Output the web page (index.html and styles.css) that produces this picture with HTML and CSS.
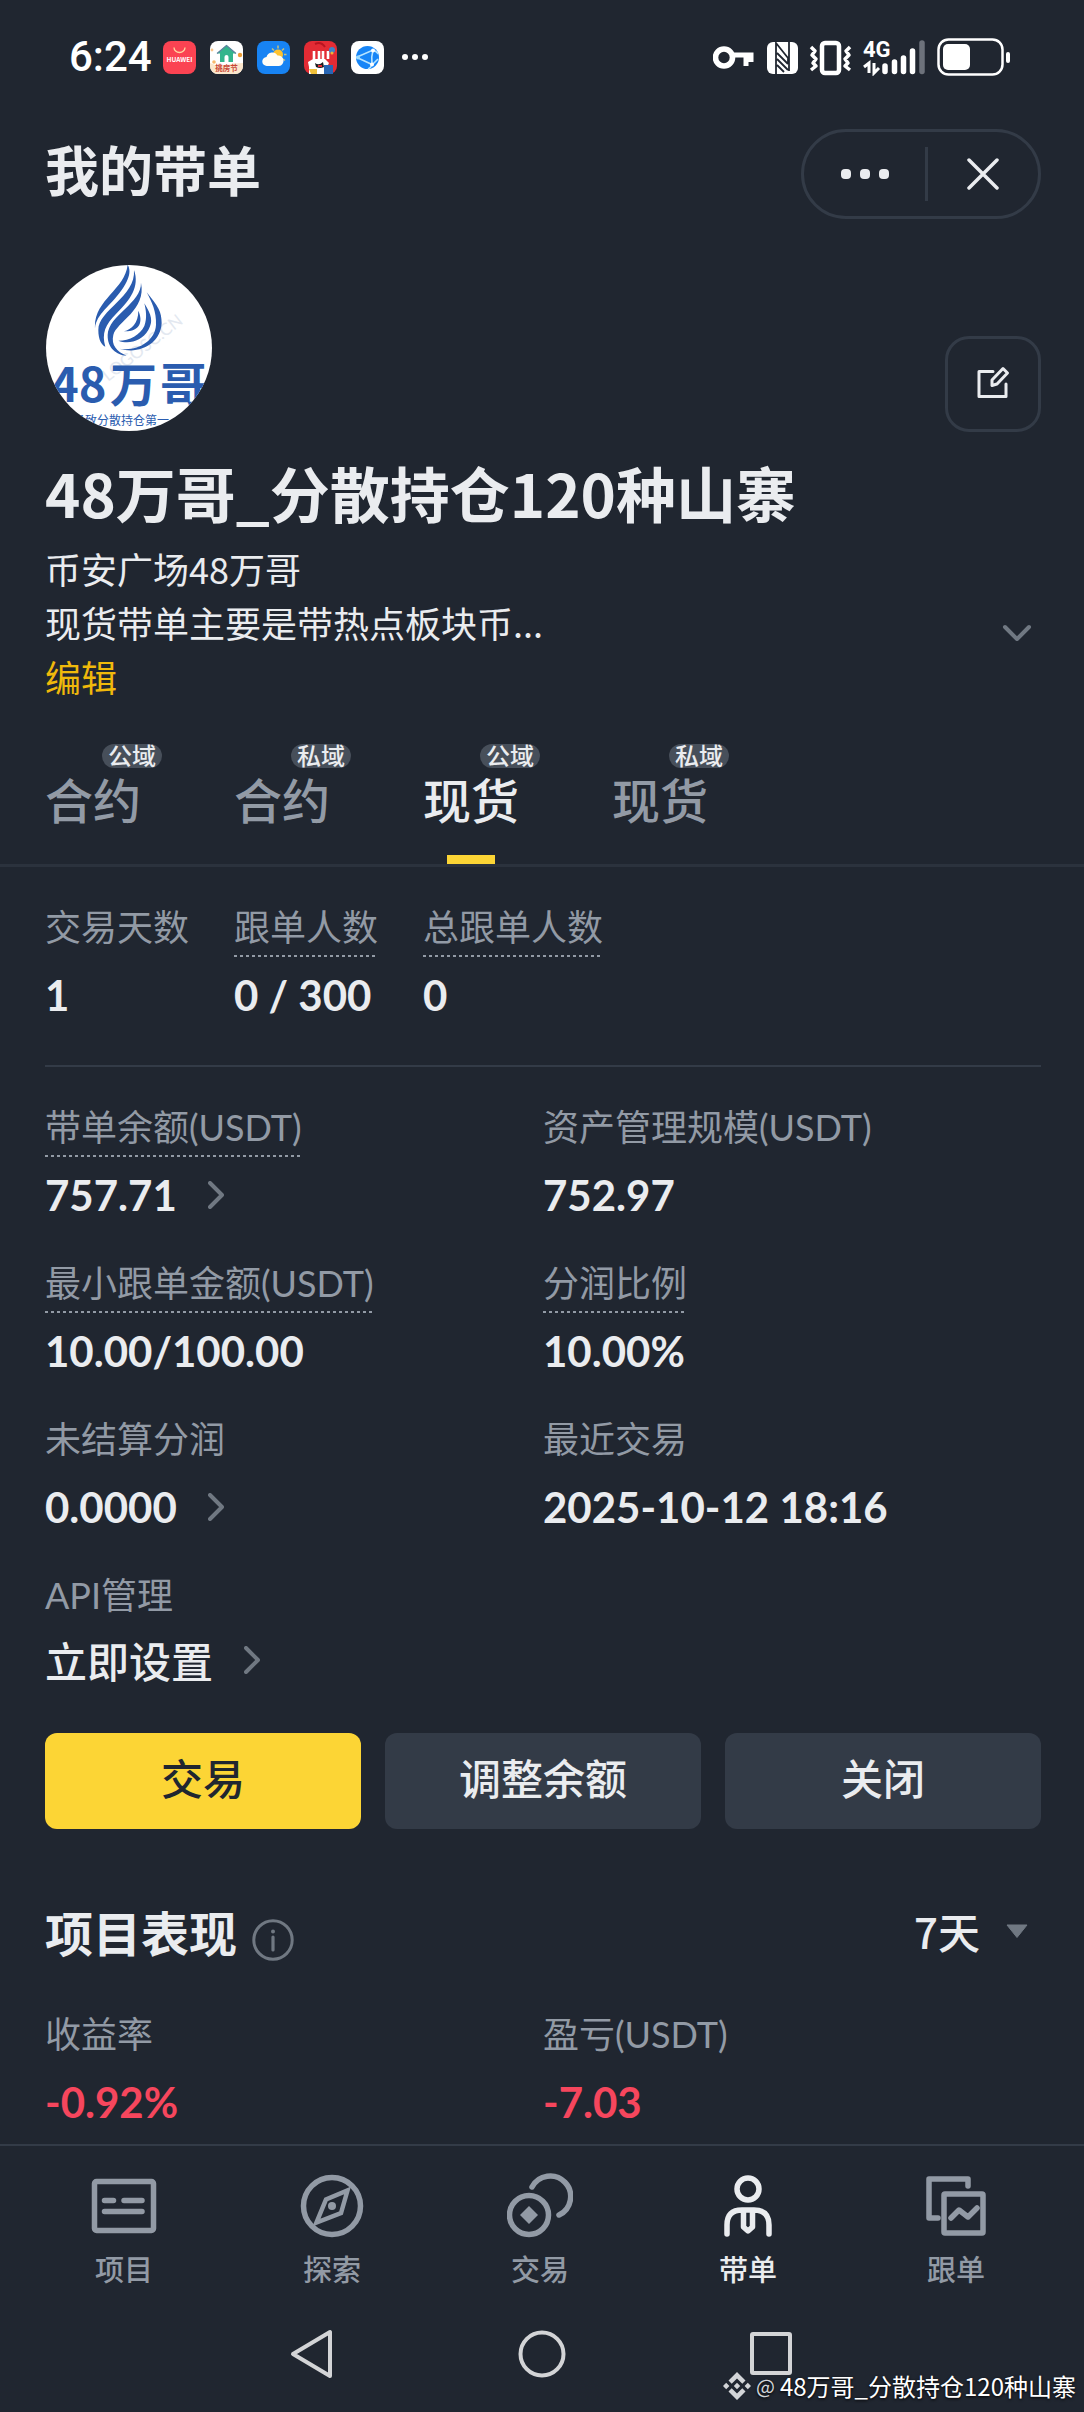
FILE: index.html
```html
<!DOCTYPE html>
<html lang="zh-CN">
<head>
<meta charset="utf-8">
<meta name="viewport" content="width=device-width, initial-scale=1">
<title>我的带单</title>
<link rel="stylesheet" href="styles.css">
</head>
<body>
<div class="statusbar">
  <div class="status-left">
    <span class="clock">6:24</span>
    <svg class="app" viewBox="0 0 33 33" aria-hidden="true"><rect width="33" height="33" rx="8" fill="#fb4352"/><path d="M11 6.500a5.500 5 0 0 0 11 0" fill="none" stroke="#ffd9a0" stroke-width="1.300"/><text x="16.500" y="21" font-size="6.500" font-weight="700" fill="#fff" text-anchor="middle">HUAWEI</text></svg>
    <svg class="app" viewBox="0 0 33 33" aria-hidden="true"><rect width="33" height="33" rx="8" fill="#fff"/><path d="M0 22q8 4 16 2t17-2v3a8 8 0 0 1-8 8H8a8 8 0 0 1-8-8z" fill="#fbe6cb"/><path d="M16.500 4L7 12.500h3V21h4.500v-5a2 2 0 0 1 4 0v5H23v-8.500h3z" fill="#33b58c"/><path d="M7 12.500L16.500 4.500l9.500 8" fill="none" stroke="#5f83a0" stroke-width="1.200"/><circle cx="30" cy="14" r="2.200" fill="#eb9c35"/><circle cx="4" cy="21" r="1.800" fill="#f7b96c"/><circle cx="2" cy="9" r="1.400" fill="#f7c58b"/><text x="16.500" y="30" font-size="7.500" font-weight="700" fill="#c84637" text-anchor="middle">挑房节</text></svg>
    <svg class="app" viewBox="0 0 33 33" aria-hidden="true"><rect width="33" height="33" rx="8" fill="#1783f3"/><path d="M21 4.500v3M27 7.500l-2 2M29.500 13.500h-2.500M28 19.500l-2-1.500M15 7.500l2 2" stroke="#c9c27b" stroke-width="1.500"/><circle cx="21" cy="13.500" r="5" fill="#ffc32e"/><path d="M10 25a4.500 4.500 0 0 1-.500-9 6 6 0 0 1 11-1.500 5.300 5.300 0 0 1 1.500 10.500z" fill="#fffdf6"/></svg>
    <svg class="app" viewBox="0 0 33 33" aria-hidden="true"><rect width="33" height="33" rx="8" fill="#e32b34"/><path d="M11 3q6-3 10 3" stroke="#b91420" stroke-width="2" fill="none"/><path d="M10 10v8M15 10v8M19 10v8M24 10v8" stroke="#fff" stroke-width="2.600"/><circle cx="28" cy="9" r="3" fill="#3d83c9"/><circle cx="28" cy="12" r="1.500" fill="#f0b536"/><path d="M5 33v-7l-1-5 5-3h12l4 4-2 4v7z" fill="#fff"/><path d="M11 22q4 3 8-1l1 5q-4 2-8 0z" fill="#1b1d20"/><path d="M5 28h8v5H7z" fill="#f0c03a"/><path d="M20 24h9v9h-9z" fill="#2866b5"/><path d="M14 24h4v2h-4z" fill="#e32b34"/></svg>
    <svg class="app" viewBox="0 0 33 33" aria-hidden="true"><rect width="33" height="33" rx="8" fill="#fff"/><circle cx="16.500" cy="16.500" r="11.500" fill="#1685f7"/><path d="M5 16.500L22 9q3 1 5.500 4M7 17l14 6.500q-1 3-4 4.500M22 9q-2 7-1 14.500M21 24l6-6" fill="none" stroke="#b6e4ff" stroke-width="1.600"/><circle cx="22" cy="9.500" r="2" fill="#fff"/><circle cx="21" cy="23.500" r="2" fill="#fff"/><circle cx="7" cy="16.500" r="2" fill="#9ddcff"/></svg>
    <svg class="more" viewBox="0 0 28 8" aria-hidden="true"><circle cx="4" cy="4" r="3" fill="#fff"/><circle cx="14" cy="4" r="3" fill="#fff"/><circle cx="24" cy="4" r="3" fill="#fff"/></svg>
  </div>
  <svg class="status-right" viewBox="0 0 298 38" aria-label="状态图标">
    <g fill="none" stroke="#fff">
      <circle cx="11" cy="19.500" r="8.500" stroke-width="5.600"/>
      <path d="M20 17h20.500M33 19v9M38 18v6" stroke-width="5"/>
    </g>
    <rect x="54" y="4" width="31" height="32" rx="6" fill="#fff"/>
    <path d="M63 36V5L75 20v6M64 15l11 11M64 21l11 11M76 4v29M64 27l7 7" fill="none" stroke="#202630" stroke-width="1.800"/>
    <rect x="109" y="5" width="17" height="30" rx="3" fill="none" stroke="#fff" stroke-width="4.500"/>
    <path d="M98 9l4 4-3 4 4 4-3 4 3 3-5 4M137 9l-4 4 3 4-4 4 3 4-3 3 5 4" fill="none" stroke="#fff" stroke-width="3.500" stroke-linejoin="round"/>
    <text x="150" y="18.500" font-size="22" font-weight="700" fill="#fff" font-family="Roboto, sans-serif">4G</text>
    <path d="M151 29l5-4v10M161 25v10l5-5" fill="none" stroke="#fff" stroke-width="3"/>
    <path d="M172 28v5.500M181.500 24v9.500M190.500 20v13.500M199.500 13v20.500" stroke="#fff" stroke-width="5.500" stroke-linecap="round"/>
    <path d="M209 5v28.500" stroke="#6d727b" stroke-width="5.500" stroke-linecap="round"/>
    <rect x="225.500" y="1.500" width="64" height="35" rx="10" fill="none" stroke="#fff" stroke-width="2.500"/>
    <rect x="230" y="6" width="27" height="26" rx="5" fill="#fff"/>
    <rect x="293" y="14" width="4" height="11" rx="2" fill="#fff"/>
  </svg>
</div>

<header class="header">
  <h1 class="title">我的带单</h1>
  <div class="capsule">
    <button class="cap-btn cap-more" aria-label="更多"><svg width="48" height="10" viewBox="0 0 48 10"><rect width="10" height="10" rx="4" fill="#eaecef"/><rect x="19" width="10" height="10" rx="4" fill="#eaecef"/><rect x="38" width="10" height="10" rx="4" fill="#eaecef"/></svg></button>
    <span class="cap-line"></span>
    <button class="cap-btn cap-close" aria-label="关闭页面"><svg width="32" height="32" viewBox="0 0 32 32"><path d="M2 2l28 28M30 2L2 30" stroke="#eaecef" stroke-width="3.500" stroke-linecap="round"/></svg></button>
  </div>
</header>

<main class="main">
  <section class="profile">
    <div class="profile-top">
      <svg class="avatar" viewBox="0 0 168 168" role="img" aria-label="48万哥">
        <defs><clipPath id="round"><circle cx="84" cy="84" r="83"/></clipPath></defs>
        <g clip-path="url(#round)">
          <rect width="168" height="168" fill="#fff"/>
          <text class="logo-mark" transform="translate(63 118) rotate(-38)">LOGOSC.CN</text>
          <g transform="translate(-15 -14) scale(.3333)" fill="#2a5caf">
            <path d="M293 44C285 120 190 150 195 235 200 190 240 170 275 120 300 85 303 60 293 44z"/>
            <path d="M312 60C318 140 205 180 205 240c0 30 10 45 21 50-11-40-1-65 34-100C300 150 330 110 312 60z"/>
            <path d="M333 98C335 160 235 195 233 255c-1 40 27 60 57 62-30-12-47-32-40-62C260 215 350 180 333 98z"/>
            <path d="M350 127c35 43 45 58 45 93-3 60-65 95-127 76 52 9 107-21 110-71 2-40-13-70-28-98z"/>
            <path d="M343 160c22 35 27 55 12 80-20 35-60 43-90 32 35 0 65-17 78-44 9-23 5-48 0-68z"/>
            <path d="M325 182c15 33 5 63-43 62 23-6 43-24 43-62z"/>
          </g>
          <text class="logo-name" y="138"><tspan x="6">48</tspan><tspan x="65">万</tspan><tspan x="115">哥</tspan></text>
          <text class="logo-sub" x="28" y="161">极致分散持仓第一</text>
        </g>
      </svg>
      <button class="edit-btn" aria-label="编辑资料"><svg width="36" height="36" viewBox="0 0 36 36" fill="none" stroke="#eaecef" stroke-width="3" stroke-linejoin="round" stroke-linecap="round"><path d="M18 5.500H4V30.500H31V18"/><path d="M28 2.500l4.500 4.500L22 18l-5 1.500V14z"/></svg></button>
    </div>
    <h2 class="name">48万哥_分散持仓120种山寨</h2>
    <div class="bio">
      <p class="bio-text">币安广场48万哥<br>现货带单主要是带热点板块币...<br><a class="bio-edit" href="#edit">编辑</a></p>
      <button class="expand" aria-label="展开"><svg width="30" height="18" viewBox="0 0 30 18"><path d="M3 3l12 12L27 3" fill="none" stroke="#707882" stroke-width="4" stroke-linecap="round" stroke-linejoin="round"/></svg></button>
    </div>
  </section>

  <nav class="tabs">
    <button class="tab">合约<span class="badge">公域</span></button>
    <button class="tab">合约<span class="badge">私域</span></button>
    <button class="tab tab-on">现货<span class="badge">公域</span></button>
    <button class="tab">现货<span class="badge">私域</span></button>
  </nav>

  <dl class="stats">
    <div><dt class="label">交易天数</dt><dd class="value">1</dd></div>
    <div><dt class="label dotted">跟单人数</dt><dd class="value">0 / 300</dd></div>
    <div><dt class="label dotted">总跟单人数</dt><dd class="value">0</dd></div>
  </dl>

  <dl class="grid">
    <div><dt class="label dotted">带单余额(USDT)</dt><dd class="value">757.71<svg class="go" viewBox="0 0 16 28"><path d="M2 2l12 12L2 26"/></svg></dd></div>
    <div><dt class="label">资产管理规模(USDT)</dt><dd class="value">752.97</dd></div>
    <div><dt class="label dotted">最小跟单金额(USDT)</dt><dd class="value">10.00/100.00</dd></div>
    <div><dt class="label dotted">分润比例</dt><dd class="value">10.00%</dd></div>
    <div><dt class="label">未结算分润</dt><dd class="value">0.0000<svg class="go" viewBox="0 0 16 28"><path d="M2 2l12 12L2 26"/></svg></dd></div>
    <div><dt class="label">最近交易</dt><dd class="value">2025-10-12 18:16</dd></div>
    <div><dt class="label">API管理</dt><dd class="value value-cjk">立即设置<svg class="go" viewBox="0 0 16 28"><path d="M2 2l12 12L2 26"/></svg></dd></div>
  </dl>

  <div class="actions">
    <button class="btn btn-primary">交易</button>
    <button class="btn">调整余额</button>
    <button class="btn">关闭</button>
  </div>

  <section class="perf">
    <div class="perf-head">
      <h3 class="perf-title">项目表现</h3>
      <svg class="info" viewBox="0 0 42 42" fill="none" stroke="#707882"><circle cx="21" cy="21" r="19.200" stroke-width="3"/><path d="M21 18v13" stroke-width="3.200" stroke-linecap="round"/><circle cx="21" cy="12.500" r="2" fill="#707882" stroke="none"/></svg>
      <label class="period"><select class="period-select" aria-label="时间范围"><option>7天</option></select><svg width="22" height="14" viewBox="0 0 22 14"><path d="M1 1h20L11 13.500z" fill="#707882" stroke="#707882" stroke-linejoin="round"/></svg></label>
    </div>
    <dl class="grid grid-perf">
      <div><dt class="label">收益率</dt><dd class="value down">-0.92%</dd></div>
      <div><dt class="label">盈亏(USDT)</dt><dd class="value down">-7.03</dd></div>
    </dl>
  </section>
</main>

<nav class="bottom">
  <a class="nav-item" href="#project"><svg class="nav-icon" viewBox="0 0 66 66"><rect x="3.500" y="8.500" width="59" height="49" rx="2"/><path d="M13.500 27.500h9M33 27.500h18M13.500 38.500H51"/></svg>项目</a>
  <a class="nav-item" href="#explore"><svg class="nav-icon" viewBox="0 0 66 66"><circle cx="33" cy="33" r="28.500"/><path d="M48.500 17.500L42 40l-24.500 9.500L27 26.500z" stroke-width="4.500" stroke-linejoin="miter"/><circle cx="33" cy="33" r="4" fill="currentColor" stroke="none"/></svg>探索</a>
  <a class="nav-item" href="#trade"><svg class="nav-icon" viewBox="0 0 66 66"><circle cx="22" cy="42" r="19.500"/><path d="M22 33l9 9-9 9-9-9z" fill="currentColor" stroke="none"/><path d="M25 14A20.500 20.500 0 1 1 52 42"/></svg>交易</a>
  <a class="nav-item nav-on" href="#lead"><svg class="nav-icon" viewBox="0 0 66 66"><circle cx="33" cy="16" r="11"/><path d="M12 61V52Q12 37 27 37H39Q54 37 54 52V61M28.500 38V54l4.500 4 4.500-4V38"/></svg>带单</a>
  <a class="nav-item" href="#copy"><svg class="nav-icon" viewBox="0 0 66 66"><path d="M15 45H6V6H45V13"/><rect x="21" y="21" width="39" height="39" rx="1"/><path d="M28 45l8-8 9 7 9-9"/></svg>跟单</a>
</nav>

<div class="sysnav">
  <button class="sys-btn" aria-label="返回"><svg width="48" height="50" viewBox="0 0 48 50"><path d="M41 3v44L4 25z"/></svg></button>
  <button class="sys-btn" aria-label="主页"><svg width="48" height="50" viewBox="0 0 48 50"><circle cx="24" cy="25" r="21.500"/></svg></button>
  <button class="sys-btn" aria-label="最近任务"><svg width="48" height="50" viewBox="0 0 48 50"><rect x="5" y="5" width="38" height="39" rx="1"/></svg></button>
  <div class="credit"><svg width="28" height="28" viewBox="0 0 28 28" fill="#d3d5d8"><path d="M14 0l8.500 8.500-3.200 3.200L14 6.400l-5.300 5.300-3.200-3.200zM14 28l8.500-8.500-3.200-3.200-5.300 5.300-5.300-5.300-3.200 3.200zM0 14l3.200-3.200L6.400 14l-3.200 3.200zM21.600 14l3.200-3.200L28 14l-3.200 3.200zM10.800 14l3.200-3.200 3.200 3.200-3.200 3.200z"/></svg><span class="at">@</span><span>48万哥_分散持仓120种山寨</span></div>
</div>
</body>
</html>
```
FILE: styles.css
```css
* { box-sizing: border-box; }

:root {
  --bg: #202630;
  --text: #eaecef;
  --muted: #929aa5;
  --dim: #707882;
  --line: #333b47;
  --yellow: #fcd535;
  --cjk: "Noto Sans CJK SC", sans-serif;
  --mixed: Lato, "Noto Sans CJK SC", sans-serif;
}

body {
  margin: 0;
  min-height: 100vh;
  display: flex;
  flex-direction: column;
  background: var(--bg);
  color: var(--text);
  font-family: var(--cjk);
}

h1, h2, h3, p, dl, dd { margin: 0; }
button {
  padding: 0;
  border: 0;
  background: none;
  color: inherit;
  font-family: inherit;
}
a { color: inherit; text-decoration: none; }
svg { display: block; flex: none; }

/* status bar */
.statusbar {
  display: flex;
  justify-content: space-between;
  align-items: center;
  height: 114px;
  padding: 0 73px 0 69px;
}
.status-left { display: flex; align-items: center; gap: 14px; }
.clock {
  width: 80px;
  font: 500 42px/60px Roboto, sans-serif;
  color: #fff;
}
.app { width: 33px; height: 33px; }
.more { width: 28px; height: 8px; margin-left: 3px; }
.status-right { width: 298px; height: 38px; }

/* header */
.header {
  display: flex;
  justify-content: space-between;
  align-items: center;
  padding: 15px 43px 0 45px;
}
.title { padding-bottom: 10px; font-size: 54px; line-height: 78px; font-weight: 700; }
.capsule {
  display: flex;
  align-items: center;
  width: 240px;
  height: 90px;
  border: 3px solid var(--line);
  border-radius: 45px;
}
.cap-btn { height: 100%; display: flex; align-items: center; justify-content: center; }
.cap-more { flex: 11 1 0; }
.cap-close { flex: 10 1 0; }
.cap-line { width: 3px; height: 54px; background: var(--line); }

/* profile */
.profile { padding: 45px 43px 0 45px; }
.profile-top { display: flex; justify-content: space-between; align-items: flex-end; }
.avatar { width: 168px; height: 168px; }
.logo-mark { font: 17px Lato, sans-serif; fill: #e3e8f0; }
.logo-name { font: 700 47px var(--cjk); fill: #2a5caf; }
.logo-sub { font: 12px var(--cjk); fill: #2a5caf; }
.edit-btn {
  display: flex;
  align-items: center;
  justify-content: center;
  width: 96px;
  height: 96px;
  border: 3px solid var(--line);
  border-radius: 24px;
}
.name { margin-top: 24px; font-size: 60px; line-height: 72px; font-weight: 700; }
.bio {
  display: flex;
  justify-content: space-between;
  align-items: center;
  margin-top: 13px;
  padding-right: 9px;
}
.bio-text { font-size: 36px; line-height: 54px; }
.bio-edit { color: #f0b90b; }
.expand { padding-top: 22px; }

/* tabs */
.tabs {
  display: flex;
  gap: 93px;
  margin-top: 41px;
  padding: 0 45px;
  border-bottom: 3px solid #2b323d;
}
.tab {
  position: relative;
  padding: 24px 0 36px;
  font-size: 48px;
  line-height: 60px;
  font-weight: 500;
  color: var(--muted);
}
.tab-on { color: var(--text); }
.tab-on::after {
  content: "";
  position: absolute;
  left: 24px;
  right: 24px;
  bottom: 0;
  height: 9px;
  background: var(--yellow);
}
.badge {
  position: absolute;
  top: 0;
  left: 57px;
  width: 60px;
  height: 24px;
  border-radius: 12px;
  background: #474f5a;
  color: var(--text);
  font-size: 24px;
  line-height: 22px;
  text-align: center;
}

/* figures */
.stats {
  display: flex;
  gap: 45px;
  margin: 0 43px 0 45px;
  padding: 36px 0 40px;
  border-bottom: 2px solid var(--line);
}
.grid {
  display: grid;
  grid-template-columns: 1fr 1fr;
  row-gap: 34px;
  padding: 36px 43px 0 45px;
}
.label {
  width: max-content;
  padding-bottom: 6px;
  font-family: var(--mixed);
  font-size: 36px;
  line-height: 48px;
  color: var(--muted);
}
.dotted {
  background: repeating-linear-gradient(90deg, var(--muted) 0 3px, transparent 3px 6px) left bottom / 100% 2px no-repeat;
}
.value {
  display: flex;
  align-items: center;
  height: 60px;
  margin-top: 8px;
  font-family: Lato, sans-serif;
  font-size: 42px;
  line-height: 60px;
  font-weight: 700;
}
.value-cjk {
  padding-bottom: 6px;
  font-family: var(--cjk);
  font-weight: 500;
}
.go {
  width: 16px;
  height: 28px;
  margin-left: 31px;
  fill: none;
  stroke: var(--dim);
  stroke-width: 4;
  stroke-linecap: round;
  stroke-linejoin: round;
}
.down { color: #f6465d; }

/* actions */
.actions {
  display: grid;
  grid-template-columns: repeat(3, 1fr);
  gap: 24px;
  padding: 40px 43px 0 45px;
}
.btn {
  height: 96px;
  padding-bottom: 8px;
  border-radius: 12px;
  background: #333b47;
  font-size: 42px;
  line-height: 60px;
  font-weight: 500;
}
.btn-primary { background: var(--yellow); color: #202630; }

/* performance */
.perf-head { display: flex; align-items: center; padding: 72px 56px 0 45px; }
.perf-title { font-size: 48px; line-height: 60px; font-weight: 700; }
.info { width: 42px; height: 42px; margin: 18px auto 0 15px; }
.period { display: flex; align-items: center; gap: 26px; }
.period-select {
  appearance: none;
  padding: 0;
  border: 0;
  background: none;
  color: inherit;
  font: 500 42px/60px var(--cjk);
}
.grid-perf { padding-top: 49px; padding-bottom: 12px; }

/* bottom navigation */
.bottom {
  display: grid;
  grid-template-columns: repeat(5, 1fr);
  margin-top: auto;
  padding: 27px 24px 2px 20px;
  border-top: 2px solid var(--line);
}
.nav-item {
  display: flex;
  flex-direction: column;
  align-items: center;
  gap: 11px;
  color: var(--muted);
  font-size: 29px;
  line-height: 36px;
  font-weight: 500;
}
.nav-on { color: var(--text); }
.nav-icon {
  width: 66px;
  height: 66px;
  fill: none;
  stroke: currentColor;
  stroke-width: 5.5;
  stroke-linecap: round;
  stroke-linejoin: round;
}

/* system navigation */
.sysnav {
  position: relative;
  display: flex;
  justify-content: center;
  gap: 181px;
  padding: 41px 0 33px;
}
.sys-btn svg {
  fill: none;
  stroke: #d3d4d6;
  stroke-width: 4;
  stroke-linejoin: round;
}
.credit {
  position: absolute;
  right: 8px;
  bottom: 8px;
  display: flex;
  align-items: center;
  gap: 5px;
  color: #fff;
  font-size: 24px;
  line-height: 36px;
  text-shadow: 0 1px 3px #000;
}
.at { color: #d3d5d8; font-size: 20px; }
```
